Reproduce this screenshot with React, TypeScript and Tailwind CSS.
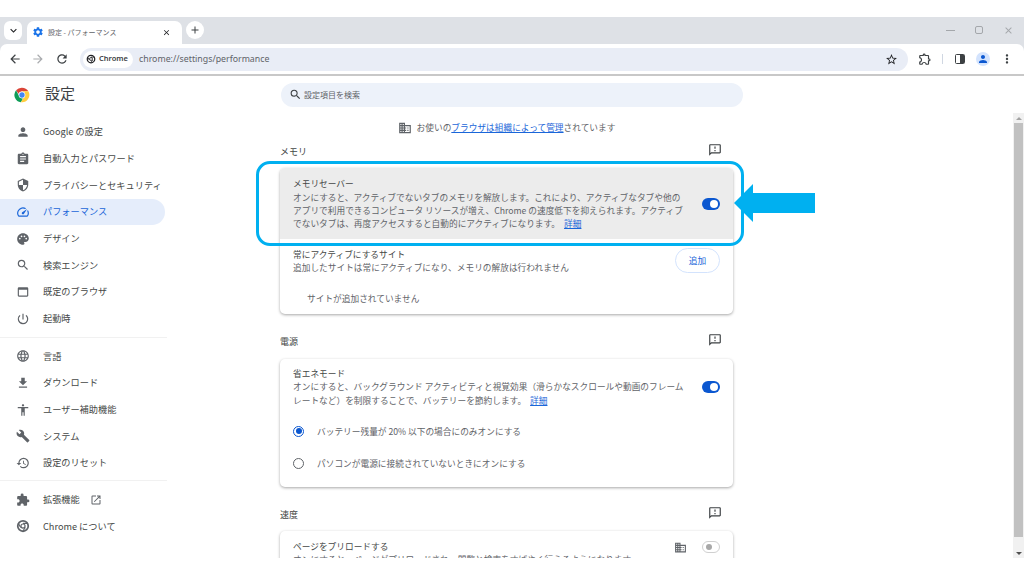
import type { ReactNode } from 'react';
import {
  MdAccessibility, MdAdd, MdArrowBack, MdArrowForward, MdAssignment, MdBuild, MdClose, MdDomain, MdExtension,
  MdFileDownload, MdKeyboardArrowDown, MdLanguage, MdMoreVert, MdOutlineExtension, MdOutlineFeedback, MdOpenInNew,
  MdPalette, MdPerson, MdPowerSettingsNew, MdRefresh, MdRestore, MdSearch, MdSecurity, MdSettings, MdSpeed,
  MdStarBorder, MdWebAsset,
} from 'react-icons/md';

function ChromeLogo({ size = 16 }: { size?: number }) {
  return (
    <svg width={size} height={size} viewBox="0 0 48 48">
      <path fill="#db4437" d="M24 2a22 22 0 0 1 19 11H24a11 11 0 0 0-10.5 7.6L6.2 10A22 22 0 0 1 24 2z" />
      <path fill="#0f9d58" d="M6.2 10l9.6 17.5A11 11 0 0 0 27 34.6L20.8 45.8A22 22 0 0 1 6.2 10z" />
      <path fill="#ffcd40" d="M43 13a22 22 0 0 1-22.200 32.800L31.500 27.500A11 11 0 0 0 30 16l-6-3z" />
      <circle cx="24" cy="24" r="10" fill="#fff" />
      <circle cx="24" cy="24" r="8" fill="#4285f4" />
    </svg>
  );
}

function ChromeMono({ size = 12, color = '#3c4043' }: { size?: number; color?: string }) {
  return (
    <svg width={size} height={size} viewBox="0 0 24 24" fill="none">
      <circle cx="12" cy="12" r="9" stroke={color} strokeWidth="3" />
      <circle cx="12" cy="12" r="3.500" stroke={color} strokeWidth="2" />
      <path d="M12 7.500h8.500M8 14.500 4 7.500M16 14.500 11.500 21" stroke={color} strokeWidth="2" />
    </svg>
  );
}

function Toggle({ on = true }: { on?: boolean }) {
  if (!on) {
    return (
      <div className="w-[18px] h-[12px] rounded-full border border-[#d0d0d0] bg-white flex items-center pl-[3px]">
        <div className="w-[6px] h-[6px] rounded-full bg-[#a8a8a8]" />
      </div>
    );
  }
  return (
    <div className="w-[18px] h-[12px] rounded-full bg-[#0b57d0] flex items-center justify-end pr-[2px]">
      <div className="w-[8px] h-[8px] rounded-full bg-white" />
    </div>
  );
}

function Radio({ on = false }: { on?: boolean }) {
  return (
    <div className={`w-[11px] h-[11px] rounded-full border flex items-center justify-center ${on ? 'border-[#0b57d0]' : 'border-[#5f6368]'}`}>
      {on && <div className="w-[6px] h-[6px] rounded-full bg-[#0b57d0]" />}
    </div>
  );
}

type NavItem = { icon: ReactNode; label: string; active?: boolean; extra?: ReactNode };

const NAV_TOP: NavItem[] = [
  { icon: <MdPerson size={14} />, label: 'Google の設定' },
  { icon: <MdAssignment size={14} />, label: '自動入力とパスワード' },
  { icon: <MdSecurity size={14} />, label: 'プライバシーとセキュリティ' },
  { icon: <MdSpeed size={14} />, label: 'パフォーマンス', active: true },
  { icon: <MdPalette size={14} />, label: 'デザイン' },
  { icon: <MdSearch size={14} />, label: '検索エンジン' },
  { icon: <MdWebAsset size={14} />, label: '既定のブラウザ' },
  { icon: <MdPowerSettingsNew size={14} />, label: '起動時' },
];

const NAV_MID: NavItem[] = [
  { icon: <MdLanguage size={14} />, label: '言語' },
  { icon: <MdFileDownload size={14} />, label: 'ダウンロード' },
  { icon: <MdAccessibility size={14} />, label: 'ユーザー補助機能' },
  { icon: <MdBuild size={14} />, label: 'システム' },
  { icon: <MdRestore size={14} />, label: '設定のリセット' },
];

const NAV_BOTTOM: NavItem[] = [
  { icon: <MdExtension size={14} />, label: '拡張機能', extra: <MdOpenInNew size={12} className="ml-[10px] text-[#5f6368]" /> },
  { icon: <ChromeMono size={14} color="#5f6368" />, label: 'Chrome について' },
];

function NavRow({ item }: { item: NavItem }) {
  return (
    <div className={`h-[26.700px] w-[165px] flex items-center pl-[16px] rounded-r-full text-[9.200px] ${item.active ? 'bg-[#e5edfb] text-[#1a66d9]' : 'text-[#444746]'}`}>
      <span className={`w-[27px] shrink-0 ${item.active ? 'text-[#1a66d9]' : 'text-[#5f6368]'}`}>{item.icon}</span>
      <span>{item.label}</span>
      {item.extra}
    </div>
  );
}

function SectionTitle({ title }: { title: string }) {
  return (
    <div className="h-[24px] flex items-center justify-between text-[9px] text-[#444746]">
      <span>{title}</span>
      <MdOutlineFeedback size={14} className="text-[#3c4043] mr-[11px] -mt-[3px]" />
    </div>
  );
}

function Card({ children, className = '' }: { children: ReactNode; className?: string }) {
  return <div className={`w-[453px] bg-white rounded-[5px] shadow-[0_1px_3px_rgba(0,0,0,0.35)] ${className}`}>{children}</div>;
}

const more = <a className="text-[#1a66d9] underline ml-[4px]">詳細</a>;

export default function App() {
  return (
    <div className="relative w-[1024px] h-[576px] overflow-hidden bg-white flex flex-col font-['Noto_Sans_CJK_JP','Noto_Sans',sans-serif] leading-none">
      <div className="h-[17px] shrink-0" />

      {/* tab strip */}
      <div className="h-[27px] shrink-0 bg-[#dee1e6] flex items-start pl-[4px] pt-[4px]">
        <div className="w-[18px] h-[19px] bg-white rounded-[6px] flex items-center justify-center text-[#202124]">
          <MdKeyboardArrowDown size={13} />
        </div>
        <div className="ml-[5px] w-[155px] h-[23px] bg-white rounded-t-[7px] flex items-center pl-[5px] pb-[1px]">
          <MdSettings size={12} className="text-[#1a73e8]" />
          <span className="ml-[4px] text-[7px] text-[#5f6368] w-[114px]">設定 - パフォーマンス</span>
          <MdClose size={9} className="text-[#202124]" />
        </div>
        <div className="ml-[4px] w-[18px] h-[18px] bg-white rounded-full flex items-center justify-center text-[#3c4043]">
          <MdAdd size={12} />
        </div>
        <div className="ml-auto flex items-center h-[18px] text-[#a4a7ab] gap-[20px] pr-[10px]">
          <div className="w-[9px] h-px bg-[#a4a7ab]" />
          <div className="w-[8px] h-[8px] border border-[#a4a7ab] rounded-[2px]" />
          <MdClose size={11} />
        </div>
      </div>

      {/* toolbar */}
      <div className="h-[30px] shrink-0 bg-[#dee1e6]">
        <div className="h-full bg-white rounded-t-[7px] flex items-center pl-[8px] text-[#3c4043]">
          <MdArrowBack size={14} />
          <MdArrowForward size={14} className="ml-[9px] text-[#a9abae]" />
          <MdRefresh size={14} className="ml-[10px]" />
          <div className="ml-[11px] w-[828px] h-[23px] rounded-full bg-[#e9edf6] flex items-center pl-[3px] pr-[10px]">
            <div className="w-[50px] h-[17px] rounded-full bg-white flex items-center pl-[3px] gap-[3px]">
              <ChromeMono size={10} color="#202124" />
              <span className="text-[7.500px] font-semibold text-[#3c4043] font-['Noto_Sans',sans-serif]">Chrome</span>
            </div>
            <span className="ml-[6px] text-[8.800px] text-[#5f6368] font-['Noto_Sans',sans-serif]">chrome://settings/performance</span>
            <MdStarBorder size={13} className="ml-auto text-[#202124]" />
          </div>
          <MdOutlineExtension size={14} className="ml-[10px]" />
          <div className="ml-[10px] w-px h-[10px] bg-[#d0d7e2]" />
          <div className="ml-[12px] w-[10px] h-[10px] border-[1.500px] border-[#3c4043] rounded-[1.500px] flex justify-end">
            <div className="w-[4px] h-full bg-[#3c4043]" />
          </div>
          <div className="ml-[11px] w-[14px] h-[14px] rounded-full bg-[#d3e3fd] flex items-center justify-center">
            <MdPerson size={12} className="text-[#0b57d0]" />
          </div>
          <MdMoreVert size={14} className="ml-[10px]" />
        </div>
      </div>
      <div className="h-[2px] shrink-0 bg-[#c8c8c8]" />

      {/* settings page */}
      <div className="h-[482px] shrink-0 flex flex-col overflow-hidden">
        <div className="h-[37px] shrink-0 flex items-center">
          <div className="w-[281px] flex items-center pl-[14px]">
            <ChromeLogo size={16} />
            <span className="ml-[15px] -mt-[4px] text-[15px] text-[#3c4043]">設定</span>
          </div>
          <div className="w-[462px] h-[24px] rounded-full bg-[#edf2fa] flex items-center pl-[8px] text-[8px] text-[#5f6368]">
            <MdSearch size={13} className="text-[#3c4043] mr-[2px]" />
            設定項目を検索
          </div>
        </div>

        <div className="flex-1 flex min-h-0">
          <div className="w-[280px] shrink-0 pt-[5.500px]">
            {NAV_TOP.map((item) => <NavRow key={item.label} item={item} />)}
            <div className="w-[167px] h-px bg-[#f1f1f1] mt-[5px] mb-[5px]" />
            {NAV_MID.map((item) => <NavRow key={item.label} item={item} />)}
            <div className="w-[167px] h-px bg-[#f1f1f1] mt-[4px] mb-[5px]" />
            {NAV_BOTTOM.map((item) => <NavRow key={item.label} item={item} />)}
          </div>

          <div className="w-[453px] shrink-0">
            <div className="h-[30px] flex items-center justify-center text-[8.700px] text-[#5f6368]">
              <MdDomain size={14} className="mr-[5px]" />
              <span>お使いの<a className="text-[#1a66d9] underline">ブラウザは組織によって管理</a>されています</span>
            </div>
            <div className="-mt-[4px]"><SectionTitle title="メモリ" /></div>
            <Card className="h-[146px] overflow-hidden mt-[5px]">
              <div className="h-[71px] bg-[#ececec] flex items-center pl-[13px] pr-[13px] text-[8.700px] leading-[13.400px] text-[#5f6368]">
                <div className="w-[397px] pt-[1px]">
                  <div className="text-[#444746]">メモリセーバー</div>
                  オンにすると、アクティブでないタブのメモリを解放します。これにより、アクティブなタブや他の<br />
                  アプリで利用できるコンピュータ リソースが増え、Chrome の速度低下を抑えられます。アクティブ<br />
                  でないタブは、再度アクセスすると自動的にアクティブになります。{more}
                </div>
                <div className="ml-auto"><Toggle /></div>
              </div>
              <div className="flex items-start pl-[13px] pr-[13px] pt-[9px] text-[8.700px] leading-[13.400px] text-[#5f6368]">
                <div>
                  <div className="text-[#444746]">常にアクティブにするサイト</div>
                  追加したサイトは常にアクティブになり、メモリの解放は行われません
                </div>
                <div className="ml-auto w-[45px] h-[25px] rounded-full border border-[#d3e3fd] flex items-center justify-center text-[#1a66d9]">追加</div>
              </div>
              <div className="pl-[27px] mt-[17px] text-[8.700px] leading-[13.400px] text-[#5f6368]">サイトが追加されていません</div>
            </Card>

            <div className="mt-[15px]"><SectionTitle title="電源" /></div>
            <Card className="h-[128px] mt-[6px] pt-[8px] text-[8.700px] leading-[13.400px] text-[#5f6368]">
              <div className="flex items-center pl-[13px] pr-[13px]">
                <div>
                  <div className="text-[#444746]">省エネモード</div>
                  オンにすると、バックグラウンド アクティビティと視覚効果（滑らかなスクロールや動画のフレーム<br />
                  レートなど）を制限することで、バッテリーを節約します。{more}
                </div>
                <div className="ml-auto"><Toggle /></div>
              </div>
              <div className="flex items-center pl-[13px] h-[32px] mt-[8px] gap-[13px]">
                <Radio on />
                <span>バッテリー残量が 20% 以下の場合にのみオンにする</span>
              </div>
              <div className="flex items-center pl-[13px] h-[32px] gap-[13px]">
                <Radio />
                <span>パソコンが電源に接続されていないときにオンにする</span>
              </div>
            </Card>

            <div className="mt-[15px]"><SectionTitle title="速度" /></div>
            <Card className="h-[80px] mt-[5px] pt-[9px] text-[8.700px] leading-[13.400px] text-[#5f6368]">
              <div className="flex items-start pl-[13px] pr-[13px]">
                <div className="w-[380px]">
                  <div className="text-[#444746]">ページをプリロードする</div>
                  オンにすると、ページがプリロードされ、閲覧と検索をすばやく行えるようになります
                </div>
                <MdDomain size={13} className="ml-auto mt-[1px] text-[#5f6368]" />
                <div className="ml-[15px] mt-[1px]"><Toggle on={false} /></div>
              </div>
            </Card>
          </div>

          {/* scrollbar */}
          <div className="ml-auto w-[11px] shrink-0 bg-[#f1f1f1] flex flex-col items-center">
            <div className="h-[10px] flex items-center"><div className="border-x-[3px] border-x-transparent border-b-[3px] border-b-[#a3a3a3]" /></div>
            <div className="w-[9px] flex-1 bg-[#c1c1c1]" />
            <div className="h-[21px] flex items-center pt-[12px]"><div className="border-x-[3px] border-x-transparent border-t-[3px] border-t-[#505050]" /></div>
          </div>
        </div>
      </div>

      {/* annotation */}
      <div className="absolute left-[256px] top-[161px] w-[488px] h-[85px] rounded-[14px] border-[3px] border-[#00b0f0]" />
      <svg className="absolute left-[734px] top-[184px]" width="82" height="38" viewBox="0 0 82 38">
        <path d="M0 19 19 0v9h62v20H19v9z" fill="#00b0f0" />
      </svg>
    </div>
  );
}
